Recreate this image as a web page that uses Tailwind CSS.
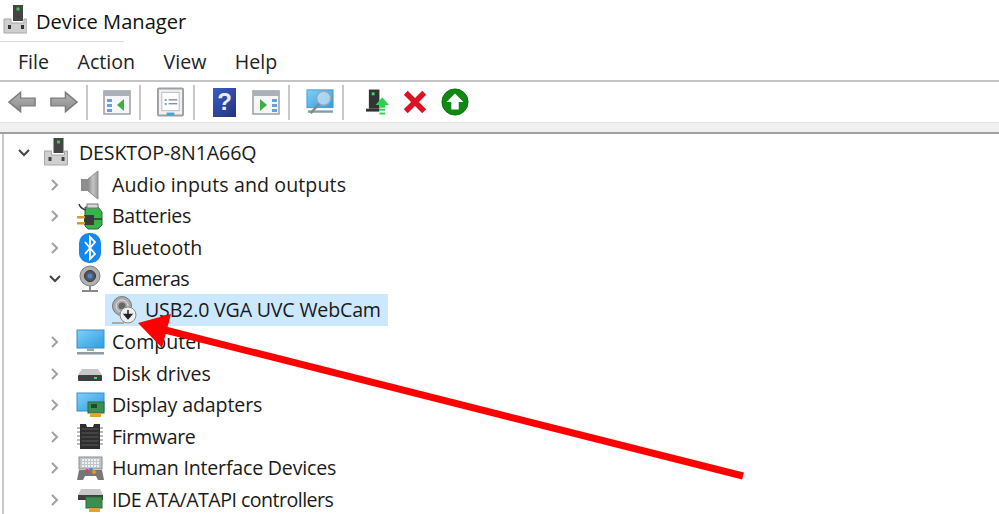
<!DOCTYPE html>
<html><head><meta charset="utf-8"><script src="https://cdn.jsdelivr.net/npm/@tailwindcss/browser@4"></script></head>
<body class="m-0 bg-white overflow-hidden">
<div class="relative w-[999px] h-[514px] overflow-hidden bg-white font-['Open_Sans','Noto_Sans',sans-serif] text-[#111] text-[19.6px] leading-none whitespace-nowrap">
  <svg width="0" height="0" class="absolute"><defs>
    <linearGradient id="ga" x1="0" y1="0" x2="0" y2="1"><stop offset="0" stop-color="#b5b5b5"/><stop offset="1" stop-color="#8a8a8a"/></linearGradient>
    <linearGradient id="gm" x1="0" y1="0" x2="1" y2="1"><stop offset="0" stop-color="#7fd0f7"/><stop offset="1" stop-color="#2f9be2"/></linearGradient>
    <linearGradient id="gs" x1="0" y1="0" x2="1" y2="0"><stop offset="0" stop-color="#8c8c8c"/><stop offset=".5" stop-color="#c4c4c4"/><stop offset="1" stop-color="#9a9a9a"/></linearGradient>
  </defs></svg>
  <!-- title -->
  <header class="h-[41px] flex items-center pl-[3px] gap-[9px]">
    <svg width="24" height="30" viewBox="0 0 24 30" class="mb-[3px] shrink-0"><rect x="10" y="1" width="10" height="16" fill="#454545"/><rect x="13.500" y="3.500" width="3" height="3" fill="#2fd04f"/><path d="M1 15h7v4h13v-4h3v14H1z" fill="#cfcfcf" stroke="#a8a8a8"/><rect x="5" y="21" width="3" height="4" fill="#333"/><rect x="18" y="21" width="3" height="4" fill="#333"/></svg>
    <span class="mt-[3px] text-[20.1px]">Device Manager</span>
  </header>
  <div class="h-px w-[124px] bg-[#d8d8d8]"></div>
  <!-- menu -->
  <nav class="h-[38px] flex items-center pl-[18px] pt-[2px] gap-[28.5px] text-[#222]">
    <span>File</span><span>Action</span><span>View</span><span>Help</span>
  </nav>
  <div class="h-[2px] bg-[#c4c4c4]"></div>
  <!-- toolbar -->
  <div class="h-[40px] flex items-center pl-[8px]">
    <svg width="29" height="26" viewBox="0 0 30 26"><path d="M1 13 13 3v6h15v8H13v6z" fill="url(#ga)" stroke="#7b7b7b" stroke-width="1.500"/></svg>
    <svg width="29" height="26" viewBox="0 0 30 26" class="ml-[12px]"><path d="M29 13 17 3v6H2v8h15v6z" fill="url(#ga)" stroke="#7b7b7b" stroke-width="1.500"/></svg>
    <i class="block w-[2px] h-[35px] bg-[#c8c8c8] ml-[8px]"></i>
    <svg width="28" height="26" viewBox="0 0 28 26" class="ml-[15px]"><rect x="1" y="2" width="26" height="23" fill="#f4f6f8" stroke="#9aa0a6" stroke-width="1.500"/><rect x="1" y="2" width="26" height="5" fill="#a9b0b6"/><rect x="4" y="10" width="5" height="3" fill="#6a9fd8"/><rect x="4" y="15" width="5" height="3" fill="#6a9fd8"/><rect x="4" y="20" width="5" height="3" fill="#6a9fd8"/><path d="M21 10v12l-7-6z" fill="#3cb043"/></svg>
    <i class="block w-[2px] h-[35px] bg-[#c8c8c8] ml-[8px]"></i>
    <svg width="27" height="30" viewBox="0 0 28 30" class="ml-[16px]"><rect x="1" y="1" width="26" height="28" rx="1" fill="#f1f1f1" stroke="#9ca0a4" stroke-width="2"/><rect x="5" y="5" width="18" height="19" fill="#fff" stroke="#b7bcc0"/><rect x="8" y="12" width="2" height="2" fill="#6a9fd8"/><rect x="12" y="12" width="9" height="1.500" fill="#8a9299"/><rect x="8" y="16" width="2" height="2" fill="#6a9fd8"/><rect x="12" y="16" width="9" height="1.500" fill="#8a9299"/><rect x="10" y="26" width="8" height="3" fill="#39a9e0"/></svg>
    <i class="block w-[2px] h-[35px] bg-[#c8c8c8] ml-[9px]"></i>
    <div class="ml-[18px] w-[23px] h-[29px] bg-[linear-gradient(135deg,#3a5cc4,#24327e)] flex items-center justify-center text-[#e8ecf8] font-bold text-[24px] font-['Liberation_Sans',sans-serif]">?</div>
    <svg width="28" height="26" viewBox="0 0 28 26" class="ml-[16px]"><rect x="1" y="2" width="26" height="23" fill="#f4f6f8" stroke="#9aa0a6" stroke-width="1.500"/><rect x="1" y="2" width="26" height="5" fill="#a9b0b6"/><rect x="20" y="10" width="5" height="3" fill="#6a9fd8"/><rect x="20" y="15" width="5" height="3" fill="#6a9fd8"/><rect x="20" y="20" width="5" height="3" fill="#6a9fd8"/><path d="M8 10v12l7-6z" fill="#3cb043"/></svg>
    <i class="block w-[2px] h-[35px] bg-[#c8c8c8] ml-[8px]"></i>
    <svg width="28" height="28" viewBox="0 0 30 28" class="ml-[16px]"><rect x="1" y="1" width="28" height="19" fill="url(#gm)" stroke="#4a9ad4"/><rect x="2" y="23" width="27" height="2.500" fill="#8b99a5"/><circle cx="19" cy="10" r="7.500" fill="#cde7f8" fill-opacity=".7" stroke="#9aa6ae" stroke-width="1.500"/><path d="M14 16 5 26" stroke="#7d8790" stroke-width="2.500"/></svg>
    <i class="block w-[2px] h-[35px] bg-[#c8c8c8] ml-[8px]"></i>
    <svg width="23" height="30" viewBox="0 0 24 30" class="ml-[22px]"><rect x="3" y="2" width="11" height="20" fill="#333"/><rect x="6" y="5" width="3" height="3" fill="#39e05a"/><rect x="0" y="22" width="14" height="3" fill="#333"/><path d="M17 10l7 8h-4v3h-6v-3h-4z" fill="#2fd04f"/><rect x="14" y="22" width="6" height="2" fill="#2fd04f"/><rect x="14" y="26" width="6" height="2" fill="#2fd04f"/></svg>
    <svg width="24" height="24" viewBox="0 0 26 26" class="ml-[14px]"><path d="M3 3 23 23M23 3 3 23" stroke="#dc1225" stroke-width="6"/></svg>
    <svg width="28" height="28" viewBox="0 0 30 30" class="ml-[14px]"><circle cx="15" cy="15" r="14" fill="#0c8a12" stroke="#0a6a0e"/><path d="M15 6l9 9h-5v8h-8v-8H6z" fill="#fff"/></svg>
  </div>
  <div class="h-[10px] bg-[#f0f0f0] border-t border-[#e4e4e4]"></div>
  <div class="h-[2px] bg-[#a0a0a0]"></div>
  <!-- tree -->
  <main class="h-[400px] ml-[2px] border-l-2 border-[#c8c8c8] pt-[3.5px] text-[#1a1a1a]">
    <div class="h-[31.5px] flex items-center pl-[14px]">
      <svg width="12" height="8" viewBox="0 0 12 8" class="shrink-0"><path d="M1 1l5 5 5-5" fill="none" stroke="#444" stroke-width="2"/></svg>
      <svg width="25" height="30" viewBox="0 0 24 30" class="ml-[13px] mb-[2px] shrink-0"><rect x="10" y="1" width="10" height="15" fill="#454545"/><rect x="13.500" y="3.500" width="3" height="3" fill="#2fd04f"/><path d="M1 14h7v4h13v-4h3v14H1z" fill="#cfcfcf" stroke="#a8a8a8"/><rect x="5" y="20" width="3" height="4" fill="#444"/><rect x="18" y="20" width="3" height="4" fill="#444"/></svg>
      <span class="ml-[11px] tracking-[-0.12px]">DESKTOP-8N1A66Q</span>
    </div>
    <div class="h-[31.5px] flex items-center pl-[47px]">
      <svg width="8" height="12" viewBox="0 0 8 12" class="shrink-0"><path d="M1 1l5 5-5 5" fill="none" stroke="#a0a0a0" stroke-width="2"/></svg>
      <div class="w-[30px] ml-[16px] flex justify-center"><svg width="22" height="30" viewBox="0 0 22 30"><rect x="2" y="9" width="7" height="12" fill="#8d8d8d"/><path d="M9 9l10-8v28l-10-8z" fill="url(#gs)" stroke="#8f8f8f"/></svg></div>
      <span class="ml-[7px] tracking-[0.1px]">Audio inputs and outputs</span>
    </div>
    <div class="h-[31.5px] flex items-center pl-[47px]">
      <svg width="8" height="12" viewBox="0 0 8 12" class="shrink-0"><path d="M1 1l5 5-5 5" fill="none" stroke="#a0a0a0" stroke-width="2"/></svg>
      <div class="w-[30px] ml-[16px] flex justify-center"><svg width="28" height="28" viewBox="0 0 28 28"><path d="M9 5h13l4 5v13l-4 4H12l-3-3z" fill="#36b34a" stroke="#2a6a36"/><rect x="11" y="2" width="11" height="4" fill="#d8d8d8" stroke="#777"/><path d="M8 13h10v10H8z" fill="#3a3a3a"/><rect x="1" y="14" width="8" height="2.500" fill="#c9a22a"/><rect x="1" y="20" width="8" height="2.500" fill="#c9a22a"/><path d="M18 17h8M3 2c1 3 3 5 7 6" stroke="#333" stroke-width="1.500" fill="none"/></svg></div>
      <span class="ml-[7px] tracking-[-0.3px]">Batteries</span>
    </div>
    <div class="h-[31.5px] flex items-center pl-[47px]">
      <svg width="8" height="12" viewBox="0 0 8 12" class="shrink-0"><path d="M1 1l5 5-5 5" fill="none" stroke="#a0a0a0" stroke-width="2"/></svg>
      <div class="w-[30px] ml-[16px] flex justify-center"><svg width="22" height="30" viewBox="0 0 22 30"><rect x="0" y="0" width="22" height="30" rx="10" fill="#1687ec"/><path d="M6 9l10 12-5 5V4l5 5L6 21" fill="none" stroke="#fff" stroke-width="1.800"/></svg></div>
      <span class="ml-[7px]">Bluetooth</span>
    </div>
    <div class="h-[31.5px] flex items-center pl-[45px]">
      <svg width="12" height="8" viewBox="0 0 12 8" class="shrink-0"><path d="M1 1l5 5 5-5" fill="none" stroke="#444" stroke-width="2"/></svg>
      <div class="w-[30px] ml-[14px] flex justify-center"><svg width="22" height="28" viewBox="0 0 22 28"><circle cx="11" cy="11" r="10" fill="#b0b0b0" stroke="#808080"/><circle cx="11" cy="11" r="5.500" fill="#556" stroke="#333"/><circle cx="11" cy="11" r="2.500" fill="#4d86c8"/><path d="M11 21v4M3 26h16" stroke="#8a8a8a" stroke-width="2"/></svg></div>
      <span class="ml-[7px] tracking-[-0.5px]">Cameras</span>
    </div>
    <div class="h-[31.5px] flex items-center pl-[101px]">
      <div class="h-[32px] w-[283px] mb-[1px] bg-[#cce8ff] flex items-center pl-[6px]">
        <svg width="26" height="28" viewBox="0 0 26 28" class="shrink-0"><circle cx="11" cy="10" r="9.500" fill="#aaa" stroke="#777"/><circle cx="11" cy="10" r="6" fill="none" stroke="#e4e4e4"/><circle cx="11" cy="10" r="3.500" fill="#666"/><path d="M1 27h12" stroke="#aaa" stroke-width="2"/><circle cx="17" cy="19" r="8" fill="#eee" stroke="#888"/><path d="M17 14v6M13.500 18.500l3.500 4 3.500-4z" fill="#222" stroke="#222" stroke-width="1.500"/></svg>
        <span class="ml-[8px] tracking-[-0.18px]">USB2.0 VGA UVC WebCam</span>
      </div>
    </div>
    <div class="h-[31.5px] flex items-center pl-[47px]">
      <svg width="8" height="12" viewBox="0 0 8 12" class="shrink-0"><path d="M1 1l5 5-5 5" fill="none" stroke="#a0a0a0" stroke-width="2"/></svg>
      <div class="w-[30px] ml-[16px] flex justify-center"><svg width="29" height="26" viewBox="0 0 29 26"><rect x="1" y="1" width="27" height="18" fill="url(#gm)" stroke="#3d8ec6"/><rect x="11" y="19" width="7" height="3" fill="#9aa"/><rect x="1" y="23" width="27" height="2.500" fill="#8f9aa3"/></svg></div>
      <span class="ml-[7px]">Computer</span>
    </div>
    <div class="h-[31.5px] flex items-center pl-[47px]">
      <svg width="8" height="12" viewBox="0 0 8 12" class="shrink-0"><path d="M1 1l5 5-5 5" fill="none" stroke="#a0a0a0" stroke-width="2"/></svg>
      <div class="w-[30px] ml-[16px] flex justify-center"><svg width="26" height="14" viewBox="0 0 26 14" class="mt-[3px]"><path d="M5 1h16l4 6H1z" fill="#c8c8c8"/><rect x="1" y="7" width="24" height="6" rx="1" fill="#3e3e3e"/><rect x="17" y="9" width="3" height="2" fill="#3be060"/></svg></div>
      <span class="ml-[7px]">Disk drives</span>
    </div>
    <div class="h-[31.5px] flex items-center pl-[47px]">
      <svg width="8" height="12" viewBox="0 0 8 12" class="shrink-0"><path d="M1 1l5 5-5 5" fill="none" stroke="#a0a0a0" stroke-width="2"/></svg>
      <div class="w-[30px] ml-[16px] flex justify-center"><svg width="29" height="26" viewBox="0 0 29 26"><rect x="1" y="1" width="27" height="18" fill="url(#gm)" stroke="#3d8ec6"/><rect x="12" y="10" width="16" height="11" fill="#3c8e50" stroke="#2a6a36"/><rect x="15" y="12" width="6" height="4" fill="#1c4a2a"/><rect x="14" y="21" width="11" height="4" fill="#e8a030"/></svg></div>
      <span class="ml-[7px] tracking-[-0.13px]">Display adapters</span>
    </div>
    <div class="h-[31.5px] flex items-center pl-[47px]">
      <svg width="8" height="12" viewBox="0 0 8 12" class="shrink-0"><path d="M1 1l5 5-5 5" fill="none" stroke="#a0a0a0" stroke-width="2"/></svg>
      <div class="w-[30px] ml-[16px] flex justify-center"><svg width="26" height="27" viewBox="0 0 26 27"><path d="M3 1h6l1 3h6l1-3h6v25H3z" fill="#2e2e2e"/><path d="M4.500 6h17M4.500 10h17M4.500 14h17M4.500 18h17M4.500 22h17" stroke="#5a5a5a"/><path d="M0 5h3M0 9h3M0 13h3M0 17h3M0 21h3M23 5h3M23 9h3M23 13h3M23 17h3M23 21h3" stroke="#777"/></svg></div>
      <span class="ml-[7px] tracking-[-0.35px]">Firmware</span>
    </div>
    <div class="h-[31.5px] flex items-center pl-[47px]">
      <svg width="8" height="12" viewBox="0 0 8 12" class="shrink-0"><path d="M1 1l5 5-5 5" fill="none" stroke="#a0a0a0" stroke-width="2"/></svg>
      <div class="w-[30px] ml-[16px] flex justify-center"><svg width="29" height="25" viewBox="0 0 29 25"><rect x="3" y="1" width="23" height="12" fill="#bfc4c8" stroke="#8a8f94"/><path d="M6 4h17M6 7h17M6 10h17" stroke="#fff" stroke-dasharray="2 1" stroke-width="1.500"/><path d="M1 24l2-10h23l2 10h-6l-2-4H9l-2 4z" fill="#777"/><circle cx="11" cy="15" r="2" fill="#d44"/><circle cx="15" cy="14" r="2" fill="#48c"/><circle cx="18" cy="16" r="2" fill="#e90"/></svg></div>
      <span class="ml-[7px] tracking-[-0.2px]">Human Interface Devices</span>
    </div>
    <div class="h-[31.5px] flex items-center pl-[47px]">
      <svg width="8" height="12" viewBox="0 0 8 12" class="shrink-0"><path d="M1 1l5 5-5 5" fill="none" stroke="#a0a0a0" stroke-width="2"/></svg>
      <div class="w-[30px] ml-[16px] flex justify-center"><svg width="27" height="24" viewBox="0 0 27 24"><path d="M4 1h19l3 6H1z" fill="#c8c8c8"/><rect x="1" y="7" width="25" height="5" fill="#3e3e3e"/><rect x="9" y="9" width="16" height="11" fill="#3c8e50" stroke="#2a6a36"/><rect x="12" y="20" width="11" height="4" fill="#e8a030"/></svg></div>
      <span class="ml-[7px] tracking-[-0.53px]">IDE ATA/ATAPI controllers</span>
    </div>
  </main>
  <!-- arrow annotation -->
  <svg class="absolute left-0 top-0 pointer-events-none" width="999" height="514" viewBox="0 0 999 514"><path d="M743 476 165 330" stroke="#ff0000" stroke-width="7" fill="none"/><path d="M138 323 171 314 162 348z" fill="#ff0000"/></svg>
</div>
</body></html>
